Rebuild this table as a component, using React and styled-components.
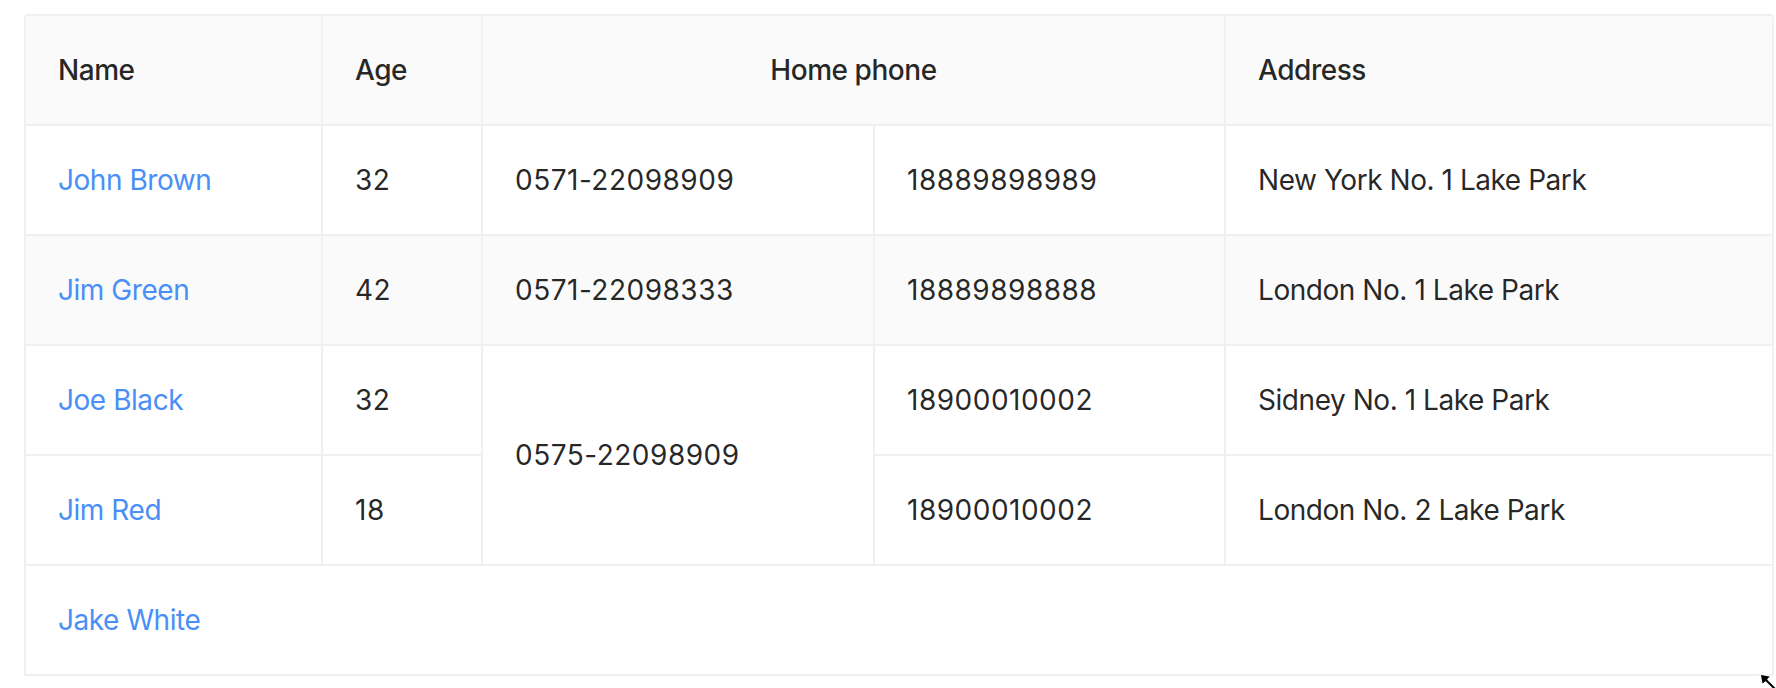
import React from "react";
import styled, { createGlobalStyle } from "styled-components";

const GlobalStyle = createGlobalStyle`
  html, body {
    margin: 0;
    padding: 0;
    background: #ffffff;
  }
  body {
    font-family: Inter, "Noto Sans", Roboto, sans-serif;
    -webkit-font-smoothing: antialiased;
  }
`;

const Page = styled.div`
  position: relative;
  width: 1776px;
  height: 688px;
  padding: 14px 4px 0 24px;
  box-sizing: border-box;
  overflow: hidden;
`;

const Table = styled.table`
  width: 1748px;
  table-layout: fixed;
  border-collapse: separate;
  border-spacing: 0;
  border-top: 2px solid #f0f0f0;
  border-left: 2px solid #f0f0f0;
  border-radius: 4px 4px 0 0;
  font-size: 28px;
  line-height: 44px;
  letter-spacing: -0.45px;
  color: rgba(0, 0, 0, 0.86);
`;

const HeadCell = styled.th`
  background: #fafafa;
  font-weight: 500;
  text-align: ${(p) => (p.$center ? "center" : "left")};
  padding: 32px 32px;
  border-right: 2px solid #f0f0f0;
  border-bottom: 2px solid #f0f0f0;
  &:first-child {
    border-top-left-radius: 4px;
  }
  &:last-child {
    border-top-right-radius: 4px;
  }
`;

const Row = styled.tr`
  background: ${(p) => (p.$hover ? "#fafafa" : "#ffffff")};
`;

const Cell = styled.td`
  padding: 32px 32px;
  border-right: 2px solid #f0f0f0;
  border-bottom: 2px solid #f0f0f0;
  vertical-align: middle;
  white-space: nowrap;
  background: inherit;
  letter-spacing: ${(p) => (p.$num ? "0.5px" : "inherit")};
`;

const Link = styled.a`
  color: #4a8ff6;
  text-decoration: none;
`;

const Cursor = styled.svg`
  position: absolute;
  left: 1758px;
  top: 672px;
`;

const rows = [
  { name: "John Brown", age: 32, tel: "0571-22098909", phone: "18889898989", address: "New York No. 1 Lake Park" },
  { name: "Jim Green", age: 42, tel: "0571-22098333", phone: "18889898888", address: "London No. 1 Lake Park", hover: true },
  { name: "Joe Black", age: 32, tel: "0575-22098909", telSpan: 2, phone: "18900010002", address: "Sidney No. 1 Lake Park" },
  { name: "Jim Red", age: 18, telSpan: 0, phone: "18900010002", address: "London No. 2 Lake Park" },
];

export default function App() {
  return (
    <>
      <GlobalStyle />
      <Page>
        <Table>
          <colgroup>
            <col style={{ width: 297 }} />
            <col style={{ width: 160 }} />
            <col style={{ width: 392 }} />
            <col style={{ width: 351 }} />
            <col style={{ width: 548 }} />
          </colgroup>
          <thead>
            <tr>
              <HeadCell>Name</HeadCell>
              <HeadCell>Age</HeadCell>
              <HeadCell colSpan={2} $center>
                Home phone
              </HeadCell>
              <HeadCell>Address</HeadCell>
            </tr>
          </thead>
          <tbody>
            {rows.map((r) => (
              <Row key={r.name} $hover={r.hover}>
                <Cell>
                  <Link href="#">{r.name}</Link>
                </Cell>
                <Cell $num>{r.age}</Cell>
                {r.telSpan === 0 ? null : (
                  <Cell $num rowSpan={r.telSpan || 1}>
                    {r.tel}
                  </Cell>
                )}
                <Cell $num>{r.phone}</Cell>
                <Cell>{r.address}</Cell>
              </Row>
            ))}
            <Row>
              <Cell colSpan={5}>
                <Link href="#">Jake White</Link>
              </Cell>
            </Row>
          </tbody>
        </Table>
        <Cursor width="22" height="22" viewBox="0 0 22 22">
          <path
            d="M2 2 L13 4 L10 7.5 L20 17.5 L17.5 20 L7.5 10 L4 13 Z"
            fill="#000"
            stroke="#fff"
            strokeWidth="1.5"
            strokeLinejoin="round"
          />
        </Cursor>
      </Page>
    </>
  );
}
